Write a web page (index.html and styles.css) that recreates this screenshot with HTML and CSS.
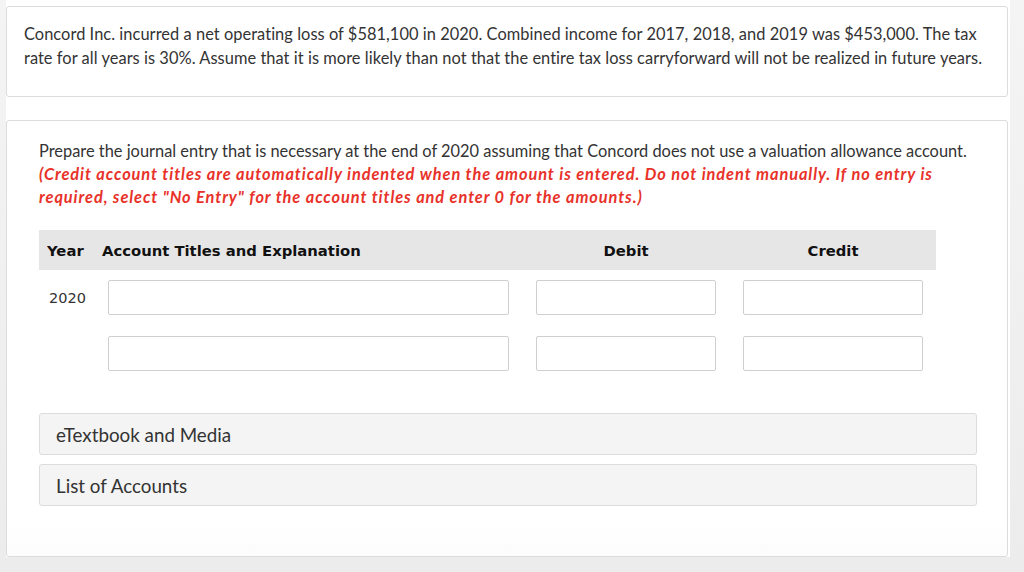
FILE: index.html
```html
<!DOCTYPE html>
<html lang="en">
<head>
<meta charset="utf-8">
<title>Journal entry</title>
<link rel="stylesheet" href="styles.css">
</head>
<body>
<div class="page">
  <div class="card intro">
    <p>Concord Inc. incurred a net operating loss of $581,100 in 2020. Combined income for 2017, 2018, and 2019 was $453,000. The tax rate for all years is 30%. Assume that it is more likely than not that the entire tax loss carryforward will not be realized in future years.</p>
  </div>
  <div class="card question">
    <p class="prompt">Prepare the journal entry that is necessary at the end of 2020 assuming that Concord does not use a valuation allowance account.<br><span class="note">(Credit account titles are automatically indented when the amount is entered. Do not indent manually. If no entry is required, select "No Entry" for the account titles and enter 0 for the amounts.)</span></p>
    <div class="journal">
      <div class="jrow head">
        <div class="c-year">Year</div>
        <div class="c-acct">Account Titles and Explanation</div>
        <div class="c-amt"><span>Debit</span></div>
        <div class="c-amt"><span>Credit</span></div>
      </div>
      <div class="jrow">
        <div class="c-year">2020</div>
        <div class="c-acct"><input class="in acct" type="text"></div>
        <div class="c-amt"><input class="in amt" type="text"></div>
        <div class="c-amt"><input class="in amt" type="text"></div>
      </div>
      <div class="jrow">
        <div class="c-year"></div>
        <div class="c-acct"><input class="in acct" type="text"></div>
        <div class="c-amt"><input class="in amt" type="text"></div>
        <div class="c-amt"><input class="in amt" type="text"></div>
      </div>
    </div>
    <div class="panels">
      <div class="panel">eTextbook and Media</div>
      <div class="panel">List of Accounts</div>
    </div>
  </div>
</div>
</body>
</html>
```
FILE: styles.css
```css
html, body {
  margin: 0;
  padding: 0;
}
body {
  background: linear-gradient(#f4f4f4, #ececec) no-repeat;
  background-color: #f6f6f6;
  font-family: Lato, "Liberation Sans", sans-serif;
  color: #333;
  height: 572px;
  overflow: hidden;
}
.page {
  margin-left: 6px;
  width: 1004px;
  padding-top: 6px;
  background: #fff;
  height: 551px;
}
.card {
  box-sizing: border-box;
  width: 1002px;
  border: 1px solid #dcdcdc;
  border-radius: 3px;
  background: #fff;
}
.intro {
  height: 91px;
  padding: 15px 17px 0;
}
.intro p {
  margin: 0;
  font-size: 16.4px;
  line-height: 24px;
  letter-spacing: 0.05px;
}
.question {
  margin-top: 23px;
  height: 437px;
  padding: 18px 31px 0 32px;
  background: linear-gradient(#fff 92%, #fcfcfc);
}
.prompt {
  margin: 0;
  font-size: 16.4px;
  line-height: 23px;
}
.note {
  color: #e8322a;
  font-weight: bold;
  font-style: italic;
  letter-spacing: 0.9px;
}
.journal {
  margin-top: 22px;
  width: 897px;
  font-family: "DejaVu Sans", Verdana, sans-serif;
}
.jrow {
  display: grid;
  grid-template-columns: 61px 428px 207px 201px;
  height: 56px;
  align-items: start;
}
.jrow.head {
  height: 40px;
  background: #e6e6e6;
  align-items: center;
  font-weight: bold;
  font-size: 14.8px;
  color: #111;
}
.c-year {
  padding-left: 8px;
}
.jrow:not(.head) .c-year {
  padding-left: 10px;
  font-size: 14.5px;
  color: #333;
  line-height: 35px;
  margin-top: 11px;
}
.head .c-acct {
  padding-left: 2px;
}
.c-amt {
  padding-left: 8px;
}
.c-amt span {
  display: block;
  width: 180px;
  text-align: center;
}
.in {
  box-sizing: border-box;
  display: block;
  height: 35px;
  margin: 10px 0 0 8px;
  border: 1px solid #cfcfcf;
  border-radius: 2px;
  background: #fff;
  padding: 0 6px;
  font: inherit;
}
.c-amt .in {
  margin-left: 0;
}
.in.acct {
  width: 401px;
}
.in.amt {
  width: 180px;
}
.panels {
  margin-top: 31px;
  display: flex;
  flex-direction: column;
  gap: 9px;
}
.panel {
  box-sizing: border-box;
  height: 42px;
  width: 938px;
  background: #f4f4f4;
  border: 1px solid #dcdcdc;
  border-radius: 3px;
  padding: 0 16px;
  display: flex;
  align-items: center;
  font-size: 18.8px;
  color: #333;
}
```
